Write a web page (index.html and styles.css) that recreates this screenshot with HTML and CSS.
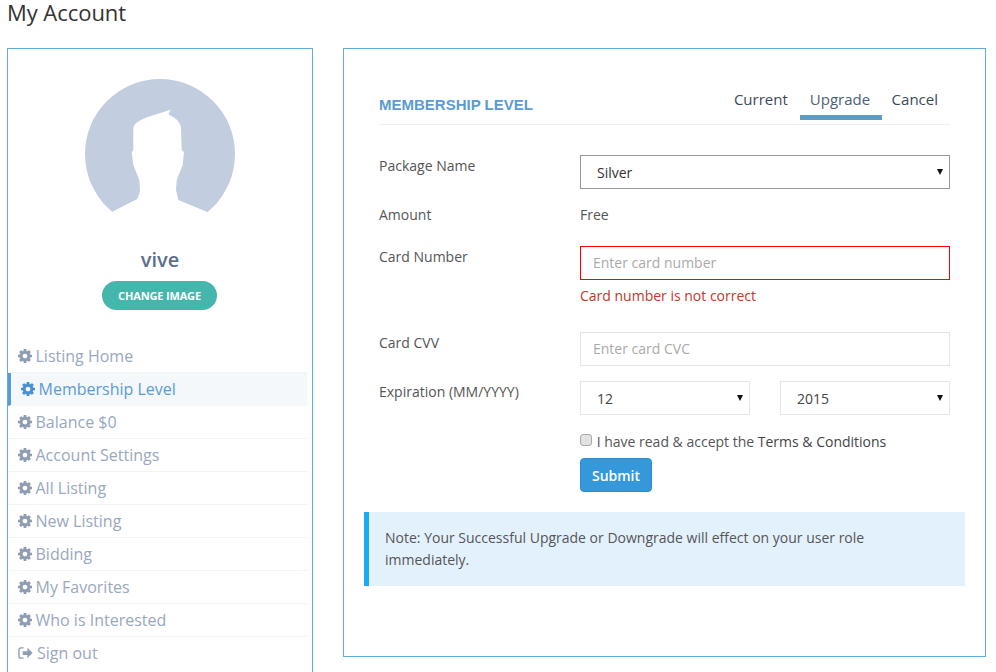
FILE: index.html
```html
<!DOCTYPE html>
<html lang="en">
<head>
<meta charset="utf-8">
<title>My Account</title>
<link rel="stylesheet" href="styles.css">
</head>
<body>
<svg class="defs" width="0" height="0" aria-hidden="true">
  <symbol id="cog" viewBox="0 0 1536 1536"><path d="M1024 768q0-106-75-181t-181-75-181 75-75 181 75 181 181 75 181-75 75-181zm512-109v222q0 12-8 23t-20 13l-185 28q-19 54-39 91 35 50 107 138 10 12 10 25t-9 23q-27 37-99 108t-94 71q-12 0-26-9l-138-108q-44 23-91 38-16 136-29 186-7 28-36 28h-222q-14 0-24.500-8.500t-11.500-21.500l-28-184q-49-16-90-37l-141 107q-10 9-25 9-14 0-25-11-126-114-165-168-7-10-7-23 0-12 8-23 15-21 51-66.500t54-70.500q-27-50-41-99l-183-27q-13-2-21-12.500t-8-23.500v-222q0-12 8-23t19-13l186-28q14-46 39-92-40-57-107-138-10-12-10-24 0-10 9-23 26-36 98.500-107.500t94.500-71.500q13 0 26 10l138 107q44-23 91-38 16-136 29-186 7-28 36-28h222q14 0 24.500 8.500t11.500 21.500l28 184q49 16 90 37l142-107q9-9 24-9 13 0 25 10 129 119 165 170 7 8 7 22 0 12-8 23-15 21-51 66.500t-54 70.500q26 50 41 98l183 28q13 2 21 12.500t8 23.500z"/></symbol>
  <symbol id="signout" viewBox="0 0 16 14"><path d="M6 1.500H3A2 2 0 0 0 1 3.500v7a2 2 0 0 0 2 2h3" fill="none" stroke="currentColor" stroke-width="1.500"/><path d="M5 5h5V1.500L15.500 7 10 12.500V9H5z"/></symbol>
</svg>
<h1 class="page-title">My Account</h1>
<div class="layout">
  <aside class="sidebar">
    <div class="profile">
      <svg class="avatar" viewBox="0 0 150 150" width="150" height="150" aria-hidden="true">
        <circle cx="75" cy="75" r="75" fill="#c3cde0"/>
        <path fill="#fff" d="M85.700 30.700L66.700 36.700Q58 39 53.300 42.700Q48.500 45 48.300 50L48.300 71L46.700 73.300L48.300 86L54.300 101L55 112.700L52.300 120L27.700 132.500L20 150H130L121.700 132.700L93.300 121L91 111L91.700 101L97.700 86L99 73.300L96.700 71L96 48Q94 42 90 39.300L83.300 35.300Z"/>
      </svg>
      <div class="profile-name">vive</div>
      <button class="change-image" type="button">CHANGE IMAGE</button>
    </div>
    <nav class="side-nav">
      <a class="side-link"><svg class="ico"><use href="#cog"/></svg>Listing Home</a>
      <a class="side-link is-active"><svg class="ico"><use href="#cog"/></svg>Membership Level</a>
      <a class="side-link"><svg class="ico"><use href="#cog"/></svg>Balance $0</a>
      <a class="side-link"><svg class="ico"><use href="#cog"/></svg>Account Settings</a>
      <a class="side-link"><svg class="ico"><use href="#cog"/></svg>All Listing</a>
      <a class="side-link"><svg class="ico"><use href="#cog"/></svg>New Listing</a>
      <a class="side-link"><svg class="ico"><use href="#cog"/></svg>Bidding</a>
      <a class="side-link"><svg class="ico"><use href="#cog"/></svg>My Favorites</a>
      <a class="side-link"><svg class="ico"><use href="#cog"/></svg>Who is Interested</a>
      <a class="side-link side-link-last"><svg class="ico ico-out"><use href="#signout"/></svg>Sign out</a>
    </nav>
  </aside>
  <main class="panel">
    <header class="panel-head">
      <h2 class="panel-title">MEMBERSHIP LEVEL</h2>
      <div class="tabs">
        <a class="tab">Current</a>
        <a class="tab is-current">Upgrade</a>
        <a class="tab">Cancel</a>
      </div>
    </header>
    <form class="form">
      <div class="row row-package">
        <label class="label">Package Name</label>
        <div class="select-wrap"><select class="control control-strong"><option>Silver</option></select></div>
      </div>
      <div class="row row-amount">
        <span class="label">Amount</span>
        <span class="label">Free</span>
      </div>
      <div class="row row-card">
        <label class="label">Card Number</label>
        <div>
          <input class="control control-error" type="text" placeholder="Enter card number">
          <div class="error">Card number is not correct</div>
        </div>
      </div>
      <div class="row row-cvv">
        <label class="label">Card CVV</label>
        <input class="control" type="text" placeholder="Enter card CVC">
      </div>
      <div class="row row-exp">
        <label class="label">Expiration (MM/YYYY)</label>
        <div class="exp-pair">
          <div class="select-wrap"><select class="control"><option>12</option></select></div>
          <div class="select-wrap"><select class="control"><option>2015</option></select></div>
        </div>
      </div>
      <div class="row row-terms">
        <span></span>
        <label class="terms"><input class="check" type="checkbox"> I have read &amp; accept the <span class="terms-strong">Terms &amp; Conditions</span></label>
      </div>
      <div class="row">
        <span></span>
        <div><button class="submit" type="button">Submit</button></div>
      </div>
    </form>
    <div class="note">Note: Your Successful Upgrade or Downgrade will effect on your user role immediately.</div>
  </main>
</div>
</body>
</html>
```
FILE: styles.css
```css
* { box-sizing: border-box; }
html, body { margin: 0; height: 672px; overflow: hidden; background: #fff; }
body { font-family: "Open Sans", "Liberation Sans", sans-serif; font-size: 14px; line-height: 22px; color: #555; }
.defs { position: absolute; }
.page-title { margin: 0; padding-left: 7px; height: 48px; font-size: 22px; line-height: 25px; font-weight: 400; color: #333; letter-spacing: -0.05px; }
.layout { display: grid; grid-template-columns: 306px 643px; column-gap: 30px; padding-left: 7px; align-items: start; }
.sidebar { border: 1px solid #5dade2; height: 700px; padding: 30px 5px 0 0; }
.profile { display: flex; flex-direction: column; align-items: center; padding-left: 5px; height: 261px; }
.avatar { display: block; margin-bottom: 19px; }
.profile-name { font-size: 20px; line-height: 24px; font-weight: 600; color: #5c6f8e; margin-bottom: 9px; }
.change-image { width: 115px; height: 29px; margin-right: 1px; border: 0; border-radius: 15px; background: #45b6ac; color: #fff; font: 700 11px/29px "Open Sans", sans-serif; letter-spacing: -0.15px; padding: 0; }
.side-nav { display: flex; flex-direction: column; }
.side-link { display: flex; align-items: center; height: 33px; padding-left: 10px; border-bottom: 1px solid #f2f3f5; font-size: 16px; color: #9aa7bf; }
.side-link.is-active { border-left: 3px solid #5b9bd5; background: #f4f8fb; color: #5b9bd5; border-bottom-color: #f4f8fb; }
.side-link-last { border-bottom: 0; padding-bottom: 1px; }
.ico { width: 14px; height: 14px; margin-right: 3.5px; fill: #8f9db3; color: #8f9db3; flex: none; }
.is-active .ico { fill: #4a90d2; color: #4a90d2; }
.ico-out { width: 15px; margin-right: 4px; }
.panel { border: 1px solid #5dade2; height: 609px; padding: 40px 35px 0; }
.panel-head { display: flex; justify-content: space-between; align-items: flex-end; height: 36px; border-bottom: 1px solid #eee; margin-bottom: 30px; }
.panel-title { margin: 0 0 9px; font: 700 15px/20px "Liberation Sans", Arial, sans-serif; color: #5b9bd1; }
.tabs { display: flex; margin-bottom: 4px; padding-right: 2px; }
.tab { padding: 0 10px 5px 10px; border-bottom: 5px solid transparent; font-size: 15px; line-height: 21px; color: #3c4a5c; }
.tab.is-current { margin-left: 2px; padding-right: 11.5px; border-bottom-color: #5b9bd1; color: #4d5f78; }
.row { display: grid; grid-template-columns: 201px 1fr; }
.row-package { margin-bottom: 15px; }
.row-amount { min-height: 42px; }
.row-card { margin-bottom: 25px; }
.row-cvv { margin-bottom: 15px; }
.row-exp { margin-bottom: 15px; }
.row-terms { margin-bottom: 6px; }
.label { font-size: 14px; line-height: 22px; color: #555; }
.control { display: block; width: 100%; height: 34px; border: 1px solid #e5e5e5; background: #fff; font: 14px "Open Sans", sans-serif; color: #444; padding: 0 12px 2px; border-radius: 0; outline: 0; }
select.control { padding: 0 16px; appearance: none; -webkit-appearance: none; }
.control::placeholder { color: #aaa; opacity: 1; }
.control-strong { border-color: #999; color: #333; }
.control-error { border-color: #f00; }
.select-wrap { position: relative; }
.select-wrap::after { content: ""; position: absolute; right: 7px; top: 14px; border-left: 3px solid transparent; border-right: 3px solid transparent; border-top: 6px solid #111; pointer-events: none; }
.error { margin-top: 5px; line-height: 22px; color: #c0392b; }
.exp-pair { display: grid; grid-template-columns: 170px 170px; column-gap: 30px; }
.terms { display: block; height: 22px; padding-top: 1px; line-height: 22px; color: #555; }
.terms-strong { color: #444; }
.check { appearance: none; -webkit-appearance: none; display: inline-block; width: 12px; height: 12px; margin: 0 1px 0 0; vertical-align: 1px; border: 1px solid #aaa; border-radius: 3px; background: #e2e2e2; }
.submit { width: 72px; height: 34px; padding: 0; border: 1px solid #2f8ccb; border-radius: 4px; background: #3498db; color: #fff; font: 600 14px "Open Sans", sans-serif; }
.note { margin: 20px -15px 0; padding: 15px 15px 15px 16px; height: 74px; border-left: 5px solid #1eaaf1; background: #e3f1fd; color: #555; }
```
